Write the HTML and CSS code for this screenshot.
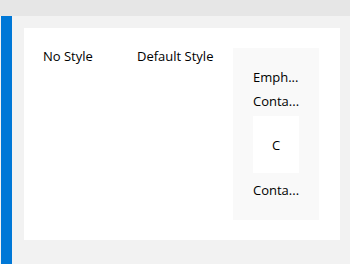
FILE: index.html
```html
<!DOCTYPE html>
<html lang="en">

<head>
    <meta charset="UTF-8">
    <title>Styles</title>
    <link rel="stylesheet" href="styles.css">
</head>

<body>

    <div class="titlebar"></div>

    <div class="main">
        <div class="accent"></div>

        <div class="content">
            <div class="card">
                <div class="col">No Style</div>
                <div class="col">Default Style</div>

                <div class="panel">
                    <div class="item">Emph...</div>
                    <div class="item">Conta...</div>
                    <div class="tile">C</div>
                    <div class="item last">Conta...</div>
                </div>
            </div>
        </div>
    </div>

</body>

</html>
```

FILE: styles.css
```css
* {
    box-sizing: border-box;
}

body {
    font-family: 'Segoe UI', 'Open Sans', sans-serif;
    font-size: 13px;
    color: #000;
    background-color: #f2f2f2;
    margin: 0;
    width: 350px;
    height: 264px;
    overflow: hidden;
}

.titlebar {
    height: 16px;
    background: #e6e6e6;
}

.main {
    display: flex;
    height: 248px;
    padding-left: 1px;
}

.accent {
    width: 11px;
    background: #0078d7;
}

.content {
    flex: 1;
    padding: 12px 10px 0 12px;
}

.card {
    background: #fff;
    height: 212px;
    padding: 20px 20px 20px 19px;
    display: grid;
    grid-template-columns: 94px 96px 86px;
    align-items: start;
}

.col {
    line-height: 16px;
}

.panel {
    background: #f9f9f9;
    height: 172px;
    padding: 20px;
}

.item {
    line-height: 19px;
    margin-bottom: 5px;
    white-space: nowrap;
}

.tile {
    background: #fff;
    height: 57px;
    margin-top: 3px;
    display: flex;
    align-items: center;
    justify-content: center;
}

.item.last {
    margin-top: 8px;
}
```
